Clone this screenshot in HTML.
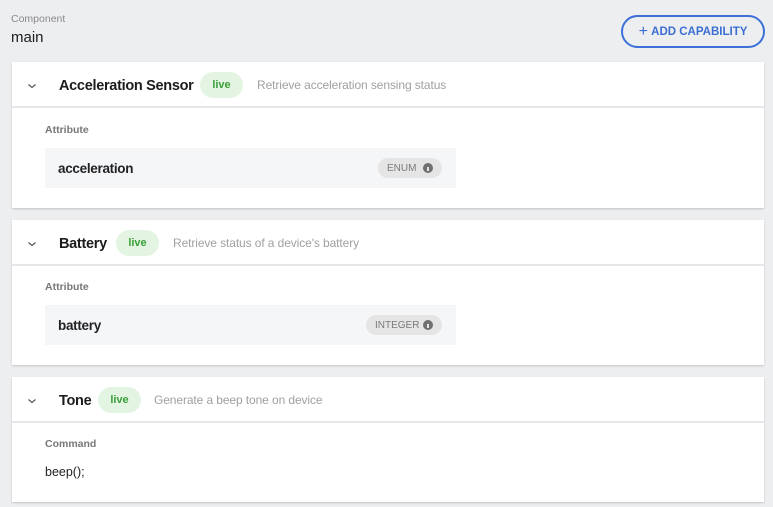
<!DOCTYPE html>
<html><head><style>
*{margin:0;padding:0;box-sizing:border-box}
body{width:773px;height:507px;background:#edeef0;font-family:"Liberation Sans",sans-serif;position:relative;overflow:hidden;color:#222}
.a{position:absolute;white-space:nowrap}
.card{position:absolute;left:12px;width:752px;background:#fff;box-shadow:0 1px 2px rgba(0,0,0,.18)}
.hd{position:absolute;left:0;top:0;width:100%;height:46px;border-bottom:2px solid #e6e7e9}
.chev{position:absolute;left:15px;top:20px}
.ttl{position:absolute;left:47px;top:16px;font-size:14.5px;font-weight:bold;letter-spacing:-0.3px;color:#1c1c1c;white-space:nowrap}
.live{position:absolute;top:10px;height:26px;width:43px;border-radius:13px;background:#e3f5e2;color:#3a9f3a;font-size:11px;font-weight:bold;text-align:center;line-height:26px}
.desc{position:absolute;top:16px;font-size:12px;color:#a0a0a0;letter-spacing:-0.1px;white-space:nowrap}
.lbl{position:absolute;left:33px;font-size:10.5px;font-weight:bold;color:#777}
.row{position:absolute;left:33px;width:411px;height:40px;background:#f5f6f8}
.rn{position:absolute;left:13px;top:13px;font-size:13.5px;font-weight:bold;color:#222;letter-spacing:-0.3px}
.pill{position:absolute;top:10px;height:20px;border-radius:10px;background:#e5e5e6;color:#7a7a7a;font-size:10px;line-height:21px;padding-left:9px}
.pill i{position:absolute;right:9px;top:5px;width:10px;height:10px;border-radius:50%;background:#707070}
.pill i:after{content:"";position:absolute;left:4px;top:4px;width:2px;height:4px;background:#e5e5e6}
</style></head><body>
<div class="a" style="left:11px;top:13px;font-size:10.5px;color:#8a8a8a">Component</div>
<div class="a" style="left:11px;top:29px;font-size:15px;color:#1c1c1c">main</div>
<div class="a" style="left:621px;top:15px;width:144px;height:33px;border:2px solid #3d71d8;border-radius:17px;color:#3b6fd4;font-size:11.5px;font-weight:bold;text-align:center;line-height:29px"><span style="font-weight:normal;font-size:16px;vertical-align:-1px">+</span>&nbsp;ADD CAPABILITY</div>

<div class="card" style="top:62px;height:146px">
 <div class="hd">
  <svg class="chev" width="10" height="8" viewBox="0 0 10 8"><path d="M1.5 2.5 L5 5.5 L8.5 2.5" fill="none" stroke="#555" stroke-width="1.2"/></svg>
  <div class="ttl">Acceleration Sensor</div>
  <div class="live" style="left:188px">live</div>
  <div class="desc" style="left:245px">Retrieve acceleration sensing status</div>
 </div>
 <div class="lbl" style="top:62px">Attribute</div>
 <div class="row" style="top:86px"><div class="rn">acceleration</div>
  <div class="pill" style="left:333px;width:64px">ENUM<i></i></div></div>
</div>

<div class="card" style="top:220px;height:145px">
 <div class="hd">
  <svg class="chev" width="10" height="8" viewBox="0 0 10 8"><path d="M1.5 2.5 L5 5.5 L8.5 2.5" fill="none" stroke="#555" stroke-width="1.2"/></svg>
  <div class="ttl">Battery</div>
  <div class="live" style="left:104px">live</div>
  <div class="desc" style="left:161px">Retrieve status of a device's battery</div>
 </div>
 <div class="lbl" style="top:61px">Attribute</div>
 <div class="row" style="top:85px"><div class="rn">battery</div>
  <div class="pill" style="left:321px;width:76px">INTEGER<i></i></div></div>
</div>

<div class="card" style="top:377px;height:125px">
 <div class="hd">
  <svg class="chev" width="10" height="8" viewBox="0 0 10 8"><path d="M1.5 2.5 L5 5.5 L8.5 2.5" fill="none" stroke="#555" stroke-width="1.2"/></svg>
  <div class="ttl">Tone</div>
  <div class="live" style="left:86px">live</div>
  <div class="desc" style="left:142px">Generate a beep tone on device</div>
 </div>
 <div class="lbl" style="top:61px">Command</div>
 <div class="a" style="left:33px;top:88px;font-size:12.5px;color:#222">beep();</div>
</div>
</body></html>
